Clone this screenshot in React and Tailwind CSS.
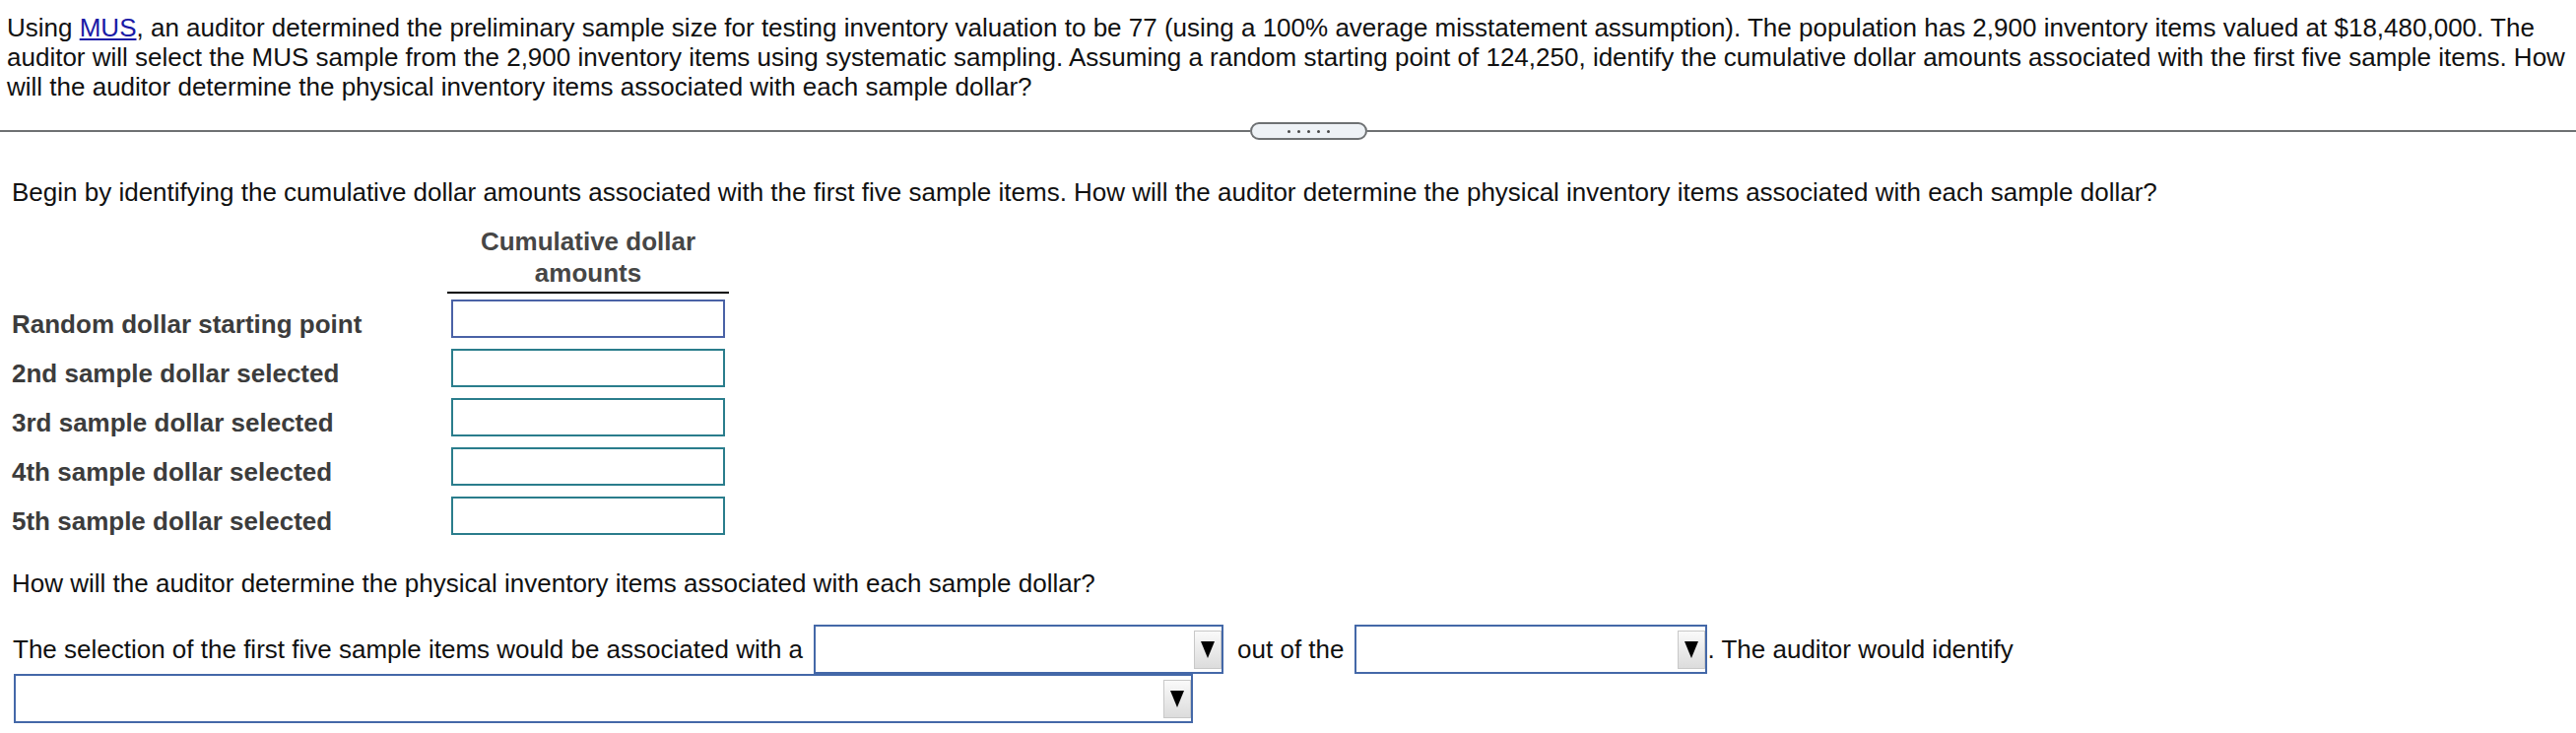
import React from "react";

function Select({ className }) {
  return (
    <div
      className={
        "relative h-[50px] border-2 border-[#4468a8] bg-white flex items-center justify-end " +
        className
      }
    >
      <div className="h-[39px] w-[28px] flex items-center justify-center border border-[#c8c8c8] bg-gradient-to-b from-[#fafafa] to-[#dcdcdc]">
        <svg width="14" height="20" viewBox="0 0 14 20">
          <polygon points="0,2 14,2 7,19" fill="#000" />
        </svg>
      </div>
    </div>
  );
}

export default function App() {
  const rows = [
    "Random dollar starting point",
    "2nd sample dollar selected",
    "3rd sample dollar selected",
    "4th sample dollar selected",
    "5th sample dollar selected",
  ];
  return (
    <div className="w-[2615px] h-[744px] bg-white font-['Liberation_Sans',Arial,sans-serif] text-[26px] text-[#111] overflow-hidden">
      <p className="pl-[7px] pr-[3px] pt-[13px] leading-[30px]">
        Using <span className="text-[#1a1aa6] underline">MUS</span>, an auditor determined the
        preliminary sample size for testing inventory valuation to be 77 (using a 100% average
        misstatement assumption). The population has 2,900 inventory items valued at $18,480,000.
        The auditor will select the MUS sample from the 2,900 inventory items using systematic
        sampling. Assuming a random starting point of 124,250, identify the cumulative dollar
        amounts associated with the first five sample items. How will the auditor determine the
        physical inventory items associated with each sample dollar?
      </p>

      <div className="mt-[21px] flex items-center">
        <div className="w-[1269px] h-[2px] bg-[#6e7173]" />
        <div className="w-[119px] h-[18px] rounded-full border-2 border-[#6e7173] bg-[#eef2f6] flex items-center justify-center gap-[7px]">
          <span className="w-[3px] h-[3px] rounded-full bg-[#4a4a4a]" />
          <span className="w-[3px] h-[3px] rounded-full bg-[#4a4a4a]" />
          <span className="w-[3px] h-[3px] rounded-full bg-[#4a4a4a]" />
          <span className="w-[3px] h-[3px] rounded-full bg-[#4a4a4a]" />
          <span className="w-[3px] h-[3px] rounded-full bg-[#4a4a4a]" />
        </div>
        <div className="flex-1 h-[2px] bg-[#6e7173]" />
      </div>

      <p className="px-[12px] mt-[38px] leading-[30px]">
        Begin by identifying the cumulative dollar amounts associated with the first five sample
        items. How will the auditor determine the physical inventory items associated with each
        sample dollar?
      </p>

      <div className="pl-[12px] mt-[19px] flex">
        <div className="w-[442px] pt-[70px] flex flex-col">
          {rows.map((r) => (
            <div key={r} className="h-[50px] flex items-center pt-[11px] font-bold text-[#3c3c3c]">
              {r}
            </div>
          ))}
        </div>
        <div className="w-[286px] flex flex-col">
          <div className="text-center font-bold text-[#464646] leading-[32px] pb-[3px] border-b-2 border-black">
            Cumulative dollar
            <br />
            amounts
          </div>
          <div className="flex flex-col pt-[6px] gap-[11px]">
            {rows.map((r, i) => (
              <div
                key={r}
                className={
                  "mx-[4px] h-[39px] border-2 bg-white " +
                  (i === 0 ? "border-[#4a62a6]" : "border-[#2a7d8c]")
                }
              />
            ))}
          </div>
        </div>
      </div>

      <p className="px-[12px] mt-[28px] leading-[30px]">
        How will the auditor determine the physical inventory items associated with each sample
        dollar?
      </p>

      <div className="pl-[13px] mt-[27px] flex flex-wrap items-center">
        <span>The selection of the first five sample items would be associated with a</span>
        <Select className="ml-[11px] w-[416px]" />
        <span className="ml-[14px]">out of the</span>
        <Select className="ml-[11px] w-[358px]" />
        <span>. The auditor would identify</span>
        <div className="basis-full h-0" />
        <Select className="w-[1197px] ml-[1px]" />
      </div>
    </div>
  );
}
